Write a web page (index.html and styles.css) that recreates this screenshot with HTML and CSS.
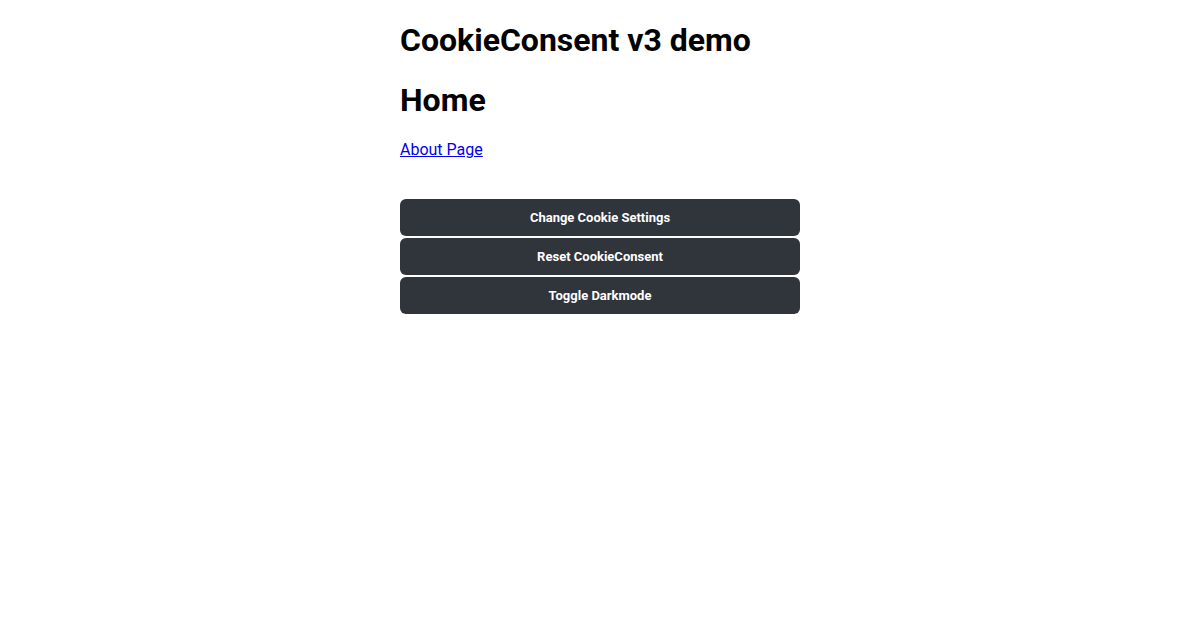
FILE: index.html
```html
<!DOCTYPE html>
<html lang="en">
<head>
<meta charset="utf-8">
<title>CookieConsent v3 demo</title>
<link rel="stylesheet" href="styles.css">
</head>
<body>
<main class="page">
  <h1 class="title">CookieConsent v3 demo</h1>
  <h1 class="title">Home</h1>
  <p class="nav"><a href="#about">About Page</a></p>
  <div class="actions">
    <button class="btn" type="button">Change Cookie Settings</button>
    <button class="btn" type="button">Reset CookieConsent</button>
    <button class="btn" type="button">Toggle Darkmode</button>
  </div>
</main>
</body>
</html>
```

FILE: styles.css
```css
html, body {
  margin: 0;
  padding: 0;
  background: #fff;
}
body {
  font-family: Roboto, "Liberation Sans", sans-serif;
  color: #000;
}
.page {
  width: 400px;
  margin: 0 auto;
}
.title {
  font-size: 32px;
  font-weight: 700;
  margin: 21.44px 0;
}
.nav {
  font-size: 16px;
  margin: 16px 0;
}
.nav a {
  color: #0000ee;
}
.actions {
  margin-top: 40px;
  display: flex;
  flex-direction: column;
  gap: 2px;
}
.btn {
  display: block;
  width: 100%;
  height: 37px;
  border: none;
  border-radius: 6px;
  background: #30343b;
  color: #fff;
  font-family: Roboto, "Liberation Sans", sans-serif;
  font-size: 13px;
  font-weight: 700;
  cursor: pointer;
}
```
